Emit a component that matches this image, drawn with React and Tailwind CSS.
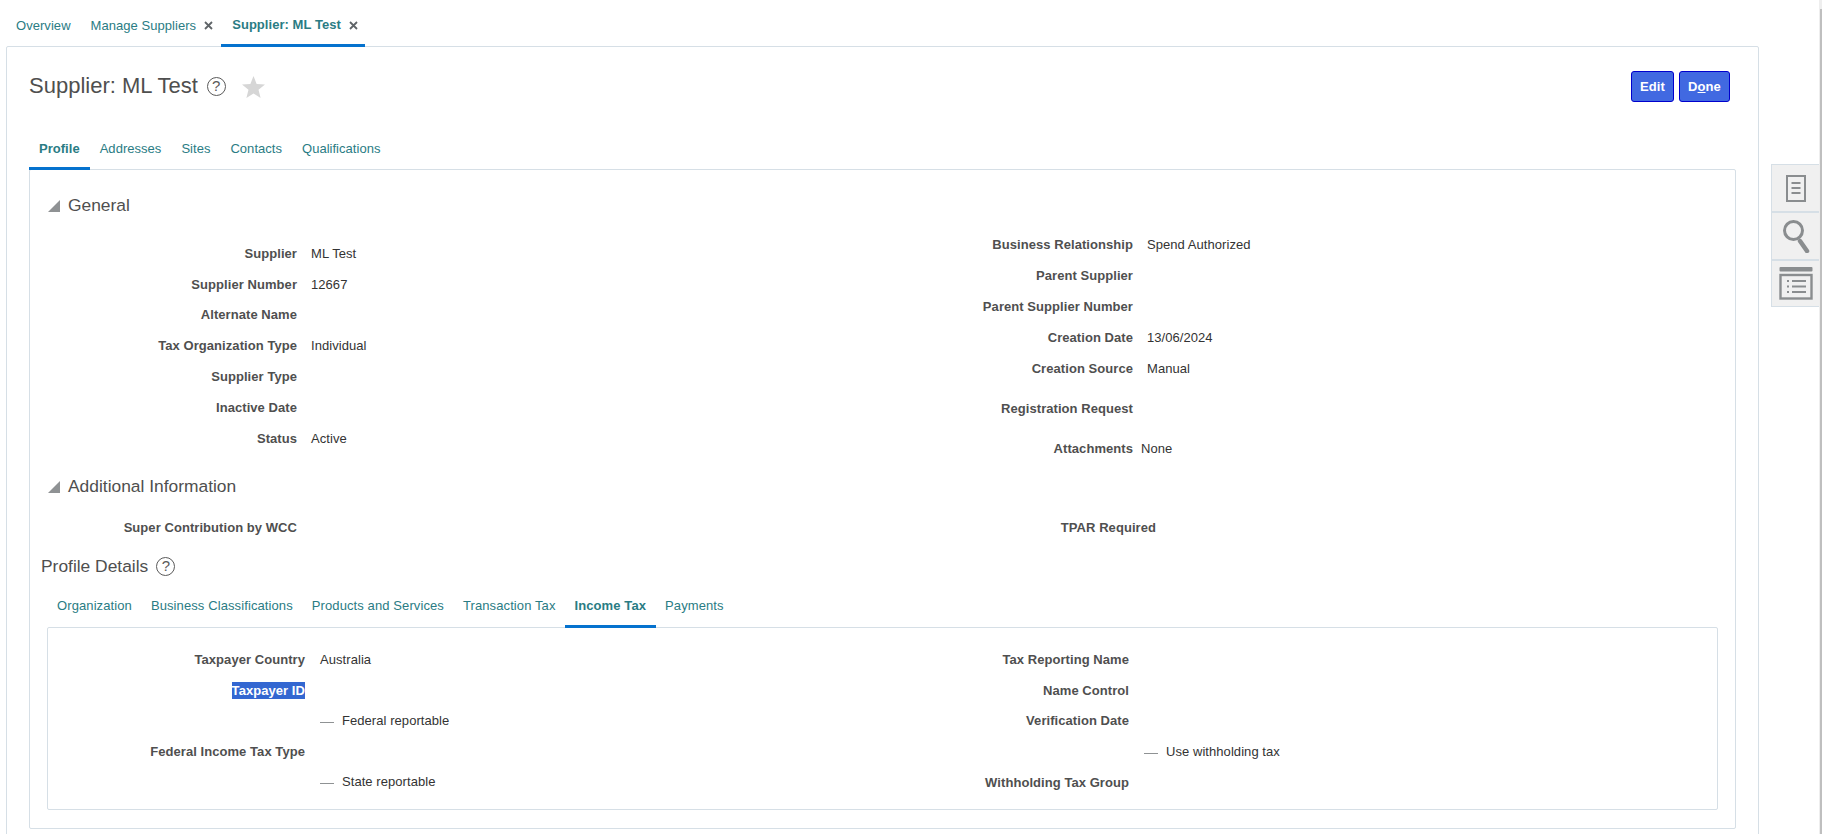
import React from "react";

const Help = ({ className }) => (
  <span className={`flex items-center justify-center rounded-full border-[1.5px] border-[#5a5a5a] text-[#5a5a5a] font-normal ${className}`}>
    ?
  </span>
);

const CloseIcon = () => (
  <svg width="9" height="9" viewBox="0 0 9 9" className="shrink-0">
    <path d="M1 1L8 8M8 1L1 8" stroke="#5f6468" strokeWidth="1.8" />
  </svg>
);

const Triangle = () => (
  <svg width="12" height="12" viewBox="0 0 12 12" className="shrink-0">
    <polygon points="12,0 12,12 0,12" fill="#8f9294" />
  </svg>
);

const SectionHeading = ({ title }) => (
  <div className="flex items-center h-[25px] pl-[18px] gap-2 text-[17.4px] tracking-normal text-[#4f4f4f]">
    <Triangle />
    <span>{title}</span>
  </div>
);

const Row = ({ label, value, labelClass, valueClass = "ml-[14px]", className = "h-[31px]" }) => (
  <div className={`flex items-center ${className}`}>
    <div className={`shrink-0 text-right font-bold text-[#4f4f4f] ${labelClass}`}>{label}</div>
    {value && <div className={`text-[#333333] ${valueClass}`}>{value}</div>}
  </div>
);

const Check = ({ label }) => (
  <div className="flex items-center gap-2 text-[#333333]">
    <span className="w-[14px] h-px bg-[#8f9294] mt-[3px]"></span>
    <span>{label}</span>
  </div>
);

const generalLeft = [
  ["Supplier", "ML Test"],
  ["Supplier Number", "12667"],
  ["Alternate Name", ""],
  ["Tax Organization Type", "Individual"],
  ["Supplier Type", ""],
  ["Inactive Date", ""],
  ["Status", "Active"],
];

const detailTabs = [
  "Organization",
  "Business Classifications",
  "Products and Services",
  "Transaction Tax",
  "Income Tax",
  "Payments",
];

const SideTray = () => (
  <div className="w-[48px] mt-[164px] h-[143px] bg-[#f0f0f0] border-y border-l border-[#d6dfe6] flex flex-col">
    <div className="h-[48px] flex items-center justify-center border-b-2 border-[#d6dfe6]">
      <svg width="20" height="27" viewBox="0 0 20 27" fill="none" stroke="#8a8d8f">
        <rect x="1" y="1" width="18" height="25" strokeWidth="2" />
        <path d="M5.5 8H14.5M5.5 13H14.5M5.5 18H14.5" strokeWidth="2" />
      </svg>
    </div>
    <div className="h-[48px] flex items-center justify-center border-b-2 border-[#d6dfe6]">
      <svg width="28" height="34" viewBox="0 0 28 34" fill="none" stroke="#8a8d8f">
        <circle cx="11.5" cy="11.5" r="9" strokeWidth="3" />
        <path d="M18 22L25 32" strokeWidth="4.5" strokeLinecap="round" />
      </svg>
    </div>
    <div className="flex-1 flex items-center justify-center">
      <svg width="34" height="33" viewBox="0 0 34 33" fill="none" stroke="#8a8d8f">
        <rect x="0.5" y="0" width="33" height="4.5" rx="1" fill="#8a8d8f" stroke="none" />
        <rect x="1.5" y="8" width="31" height="23.5" strokeWidth="2.4" />
        <path d="M8 14H10M13 14H27M8 19.5H10M13 19.5H27M8 25H10M13 25H27" strokeWidth="2" />
      </svg>
    </div>
  </div>
);

export default function App() {
  return (
    <div className="flex h-[834px] overflow-hidden bg-white text-[13px] tracking-[0.06px] font-['Liberation_Sans',Arial,sans-serif]">
      <div className="w-[1753px] ml-[6px] shrink-0">
        <div className="flex h-[47px] -mb-px relative text-[#2a7c84] tracking-[0.05px]">
          <div className="pl-[10px] pr-[10px] flex items-center pt-[6px] pb-[2px]">Overview</div>
          <div className="pl-[10px] pr-[8px] flex items-center gap-[8px] pt-[6px] pb-[2px]">
            Manage Suppliers <CloseIcon />
          </div>
          <div className="pl-[11px] pr-[7px] flex items-center gap-[8px] pt-[6px] font-bold border-b-[3px] border-[#0572ce]">
            Supplier: ML Test <CloseIcon />
          </div>
        </div>

        <div className="h-[800px] border border-[#d6dfe6] rounded-[2px] px-[22px] pt-[24px]">
          <div className="flex justify-between h-[31px] pr-[6px]">
            <div className="flex items-center text-[22px] tracking-normal text-[#4f4f4f] -mt-[3px]">
              <span>Supplier: ML Test</span>
              <Help className="ml-[9px] w-[19px] h-[19px] text-[15px] mt-[3px]" />
              <svg width="23" height="22" viewBox="0 0 22 21" className="ml-[16px] mt-[3px]">
                <polygon points="11,0 14,7.6 22,8.1 15.8,13.2 17.8,21 11,16.7 4.2,21 6.2,13.2 0,8.1 8,7.6" fill="#d6d6d6" />
              </svg>
            </div>
            <div className="flex gap-[5px]">
              <button className="w-[43px] h-[31px] bg-[#4169e1] border border-[#0000cd] rounded-[3px] text-white font-bold">Edit</button>
              <button className="w-[51px] h-[31px] bg-[#4169e1] border border-[#0000cd] rounded-[3px] text-white font-bold">
                D<u>o</u>ne
              </button>
            </div>
          </div>

          <div className="flex h-[43px] mt-[25px] -mb-px relative text-[#2a7c84] tracking-[0.03px]">
            <div className="px-[10px] pt-[4px] flex items-center font-bold border-b-[3px] border-[#0572ce]">Profile</div>
            <div className="px-[10px] pb-[3px] pt-[4px] flex items-center">Addresses</div>
            <div className="px-[10px] pb-[3px] pt-[4px] flex items-center">Sites</div>
            <div className="px-[10px] pb-[3px] pt-[4px] flex items-center">Contacts</div>
            <div className="px-[10px] pb-[3px] pt-[4px] flex items-center">Qualifications</div>
          </div>

          <div className="w-[1707px] h-[660px] border border-[#d6dfe6] rounded-[2px]">
            <div className="mt-[23px]">
              <SectionHeading title="General" />
            </div>
            <div className="flex mt-[11px]">
              <div className="w-[800px] pt-[9px]">
                {generalLeft.map(([label, value]) => (
                  <Row key={label} label={label} value={value} labelClass="w-[267px]" className="h-[30.9px]" />
                ))}
              </div>
              <div>
                <Row label="Business Relationship" value="Spend Authorized" labelClass="w-[303px]" />
                <Row label="Parent Supplier" labelClass="w-[303px]" />
                <Row label="Parent Supplier Number" labelClass="w-[303px]" />
                <Row label="Creation Date" value="13/06/2024" labelClass="w-[303px]" />
                <Row label="Creation Source" value="Manual" labelClass="w-[303px]" />
                <Row label="Registration Request" labelClass="w-[303px]" className="h-[31px] mt-[9px]" />
                <Row label="Attachments" value="None" labelClass="w-[303px]" valueClass="ml-[8px]" className="h-[31px] mt-[9px]" />
              </div>
            </div>

            <div className="mt-[10px]">
              <SectionHeading title="Additional Information" />
            </div>
            <div className="flex mt-[13px]">
              <div className="w-[800px]">
                <Row label="Super Contribution by WCC" labelClass="w-[267px]" />
              </div>
              <Row label="TPAR Required" labelClass="w-[326px]" />
            </div>

            <div className="flex items-center gap-[8px] h-[24px] mt-[11px] pl-[11px] text-[17.4px] tracking-normal text-[#4f4f4f]">
              <span>Profile Details</span>
              <Help className="w-[19px] h-[19px] text-[15px]" />
            </div>

            <div className="flex h-[41px] mt-[9px] ml-[17.5px] -mb-px relative text-[#2a7c84] tracking-[0.1px]">
              {detailTabs.map((tab) =>
                tab === "Income Tax" ? (
                  <div key={tab} className="px-[9.5px] flex items-center font-bold border-b-[3px] border-[#0572ce]">{tab}</div>
                ) : (
                  <div key={tab} className="px-[9.5px] pb-[3px] flex items-center">{tab}</div>
                )
              )}
            </div>

            <div className="ml-[17px] w-[1671px] h-[183px] border border-[#d6dfe6] rounded-[2px] pt-[16px] flex">
              <div className="w-[800px]">
                <Row label="Taxpayer Country" value="Australia" labelClass="w-[257px]" valueClass="ml-[15px]" />
                <Row
                  label={<span className="bg-[#3367d1] text-white py-px">Taxpayer ID</span>}
                  labelClass="w-[257px]"
                />
                <div className="flex items-center h-[30px] pl-[272px]">
                  <Check label="Federal reportable" />
                </div>
                <Row label="Federal Income Tax Type" labelClass="w-[257px]" />
                <div className="flex items-center h-[30px] pl-[272px]">
                  <Check label="State reportable" />
                </div>
              </div>
              <div>
                <Row label="Tax Reporting Name" labelClass="w-[281px]" />
                <Row label="Name Control" labelClass="w-[281px]" />
                <Row label="Verification Date" labelClass="w-[281px]" className="h-[30px]" />
                <div className="flex items-center h-[31px] pl-[296px]">
                  <Check label="Use withholding tax" />
                </div>
                <Row label="Withholding Tax Group" labelClass="w-[281px]" />
              </div>
            </div>
          </div>
        </div>
      </div>

      <div className="ml-[12px] shrink-0">
        <SideTray />
      </div>
      <div className="ml-auto w-[3px] shrink-0 bg-[#eeeeee] pt-[9px] flex justify-end">
        <div className="w-[2px] bg-[#bfbfbf]"></div>
      </div>
    </div>
  );
}
